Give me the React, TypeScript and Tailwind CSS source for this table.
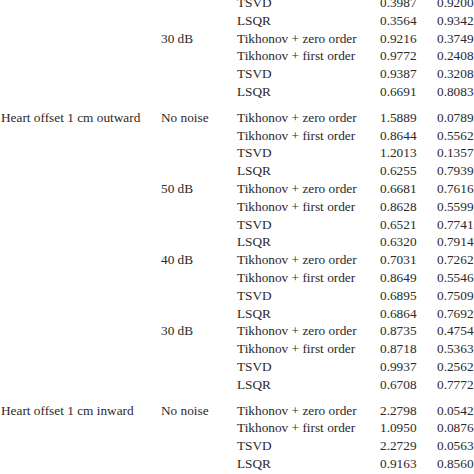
type Row = { a?: string; b?: string; m: string; x: string; y: string; gap?: boolean };

const ROWS: Row[] = [
  { m: "TSVD", x: "0.3987", y: "0.9200" },
  { m: "LSQR", x: "0.3564", y: "0.9342" },
  { b: "30 dB", m: "Tikhonov + zero order", x: "0.9216", y: "0.3749" },
  { m: "Tikhonov + first order", x: "0.9772", y: "0.2408" },
  { m: "TSVD", x: "0.9387", y: "0.3208" },
  { m: "LSQR", x: "0.6691", y: "0.8083" },
  { a: "Heart offset 1 cm outward", b: "No noise", m: "Tikhonov + zero order", x: "1.5889", y: "0.0789", gap: true },
  { m: "Tikhonov + first order", x: "0.8644", y: "0.5562" },
  { m: "TSVD", x: "1.2013", y: "0.1357" },
  { m: "LSQR", x: "0.6255", y: "0.7939" },
  { b: "50 dB", m: "Tikhonov + zero order", x: "0.6681", y: "0.7616" },
  { m: "Tikhonov + first order", x: "0.8628", y: "0.5599" },
  { m: "TSVD", x: "0.6521", y: "0.7741" },
  { m: "LSQR", x: "0.6320", y: "0.7914" },
  { b: "40 dB", m: "Tikhonov + zero order", x: "0.7031", y: "0.7262" },
  { m: "Tikhonov + first order", x: "0.8649", y: "0.5546" },
  { m: "TSVD", x: "0.6895", y: "0.7509" },
  { m: "LSQR", x: "0.6864", y: "0.7692" },
  { b: "30 dB", m: "Tikhonov + zero order", x: "0.8735", y: "0.4754" },
  { m: "Tikhonov + first order", x: "0.8718", y: "0.5363" },
  { m: "TSVD", x: "0.9937", y: "0.2562" },
  { m: "LSQR", x: "0.6708", y: "0.7772" },
  { a: "Heart offset 1 cm inward", b: "No noise", m: "Tikhonov + zero order", x: "2.2798", y: "0.0542", gap: true },
  { m: "Tikhonov + first order", x: "1.0950", y: "0.0876" },
  { m: "TSVD", x: "2.2729", y: "0.0563" },
  { m: "LSQR", x: "0.9163", y: "0.8560" },
];

export default function App() {
  return (
    <div className="w-[474px] h-[474px] overflow-hidden bg-white text-[#2a2a2a] font-['Liberation_Serif',serif] text-[13.3px] leading-[17.8px]">
      <div className="-mt-[6px] pl-[1px]">
        {ROWS.map((r, i) => (
          <div
            key={i}
            className={`grid grid-cols-[160px_76px_143px_57px_1fr] whitespace-nowrap ${r.gap ? "pt-[8px]" : ""}`}
          >
            <span>{r.a ?? ""}</span>
            <span>{r.b ?? ""}</span>
            <span>{r.m}</span>
            <span>{r.x}</span>
            <span>{r.y}</span>
          </div>
        ))}
      </div>
    </div>
  );
}
